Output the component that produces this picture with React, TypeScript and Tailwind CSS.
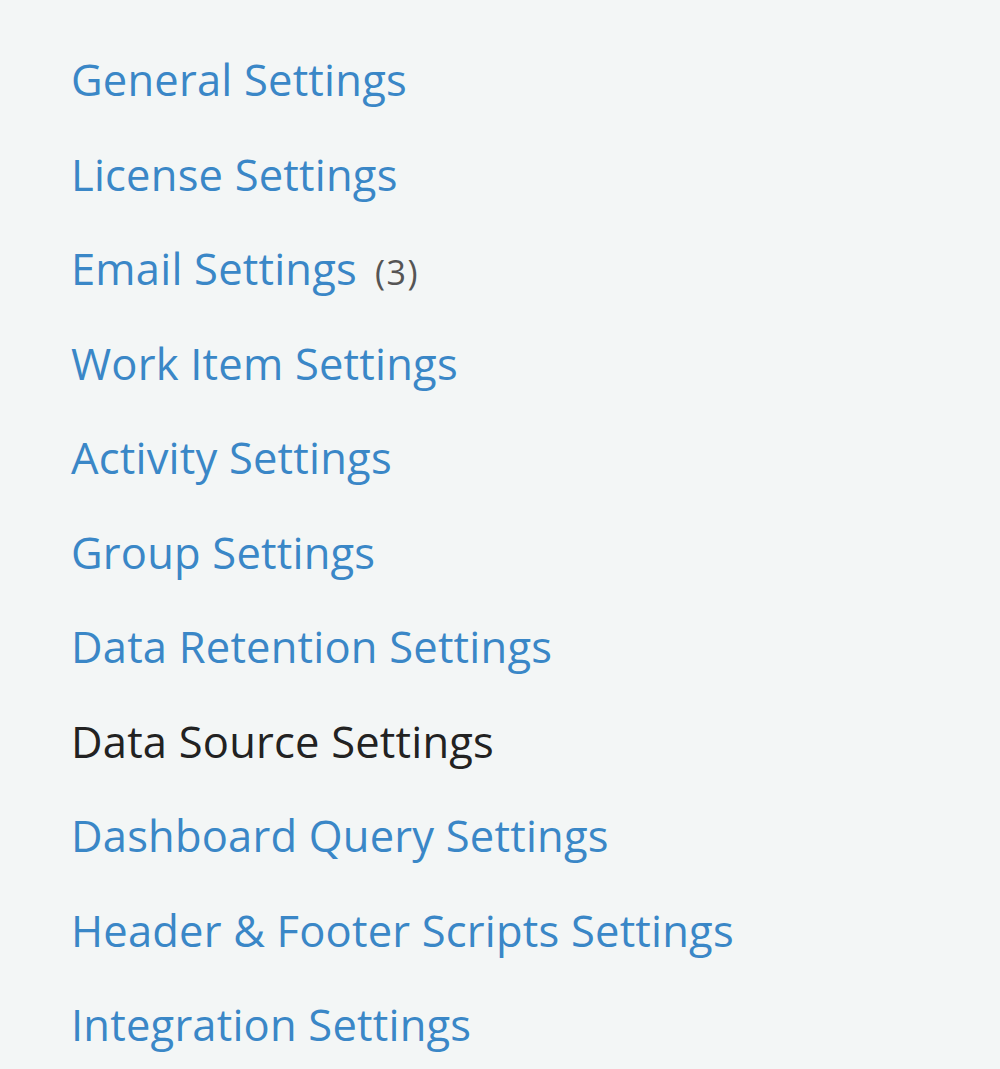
const items = [
  { label: "General Settings" },
  { label: "License Settings" },
  { label: "Email Settings", count: 3 },
  { label: "Work Item Settings" },
  { label: "Activity Settings" },
  { label: "Group Settings" },
  { label: "Data Retention Settings" },
  { label: "Data Source Settings", active: true },
  { label: "Dashboard Query Settings" },
  { label: "Header & Footer Scripts Settings" },
  { label: "Integration Settings" },
];

export default function App() {
  return (
    <div className="min-h-[1069px] w-[1000px] bg-[#f3f6f6] pl-[71px] pt-[52px] font-['Open_Sans','Liberation_Sans',sans-serif]">
      <ul className="flex flex-col">
        {items.map((it) => (
          <li key={it.label} className="h-[94.5px] text-[43.5px] leading-[56px] tracking-[0.2px]">
            <a
              href="#"
              className={it.active ? "text-[#222]" : "text-[#3a87c7]"}
            >
              {it.label}
            </a>
            {it.count !== undefined && (
              <span className="ml-[18px] text-[34px] tracking-[1.5px] text-[#555]">({it.count})</span>
            )}
          </li>
        ))}
      </ul>
    </div>
  );
}
